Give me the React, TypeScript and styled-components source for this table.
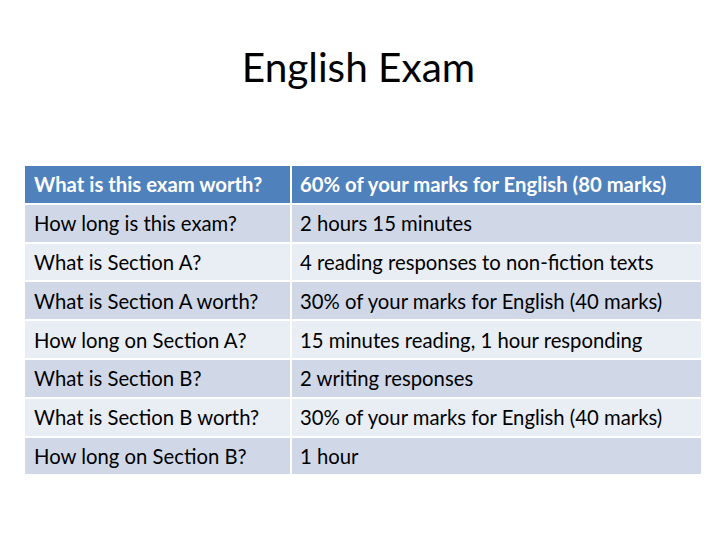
import React from "react";
import styled, { createGlobalStyle } from "styled-components";

const Global = createGlobalStyle`
  html, body { margin: 0; padding: 0; background: #fff; }
  body { font-family: Lato, "Open Sans", sans-serif; }
`;

const Slide = styled.div`
  width: 720px;
  height: 540px;
  box-sizing: border-box;
  padding: 42px 20px 0 25px;
  display: flex;
  flex-direction: column;
  background: #fff;
`;

const Title = styled.h1`
  margin: 0;
  height: 124px;
  font-family: Lato, sans-serif;
  font-weight: 400;
  font-size: 40.5px;
  line-height: 50px;
  color: #000;
  text-align: center;
  padding-right: 8px;
`;

const Table = styled.table`
  width: 676px;
  border-collapse: collapse;
  font-family: Lato, sans-serif;
  font-size: 20.3px;
  color: #000;
`;

const Row = styled.tr<{ $variant: "head" | "dark" | "light" }>`
  background: ${(p) =>
    p.$variant === "head" ? "#4F81BD" : p.$variant === "dark" ? "#D0D8E8" : "#E9EDF4"};
  color: ${(p) => (p.$variant === "head" ? "#fff" : "#000")};
  font-weight: ${(p) => (p.$variant === "head" ? 700 : 400)};
`;

const Cell = styled.td<{ $first?: boolean }>`
  height: 36.8px;
  padding: 0 0 0 ${(p) => (p.$first ? "9px" : "8px")};
  width: ${(p) => (p.$first ? "256px" : "auto")};
  border-bottom: 2px solid #fff;
  border-left: ${(p) => (p.$first ? "none" : "2px solid #fff")};
  white-space: nowrap;
  vertical-align: middle;
  line-height: 24px;
`;

const rows: [string, string][] = [
  ["What is this exam worth?", "60% of your marks for English (80 marks)"],
  ["How long is this exam?", "2 hours 15 minutes"],
  ["What is Section A?", "4 reading responses to non-fiction texts"],
  ["What is Section A worth?", "30% of your marks for English (40 marks)"],
  ["How long on Section A?", "15 minutes reading, 1 hour responding"],
  ["What is Section B?", "2 writing responses"],
  ["What is Section B worth?", "30% of your marks for English (40 marks)"],
  ["How long on Section B?", "1 hour"],
];

export default function App() {
  return (
    <>
      <Global />
      <Slide>
        <Title>English Exam</Title>
        <Table>
          <tbody>
            {rows.map(([q, a], i) => (
              <Row key={i} $variant={i === 0 ? "head" : i % 2 === 1 ? "dark" : "light"}>
                <Cell $first>{q}</Cell>
                <Cell>{a}</Cell>
              </Row>
            ))}
          </tbody>
        </Table>
      </Slide>
    </>
  );
}
